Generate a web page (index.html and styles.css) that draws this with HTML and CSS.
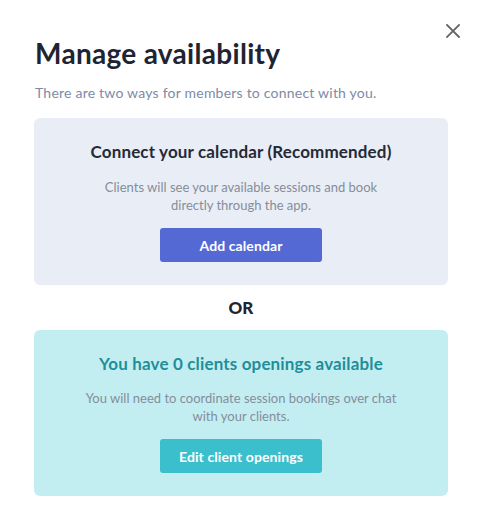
FILE: index.html
```html
<!DOCTYPE html>
<html>
  <head>
    <meta charset="utf-8">
    <title>Manage availability</title>
    <link rel="stylesheet" href="styles.css">
  </head>
<body>
  <div class="modal">
    <button class="close" title="Close">
      <svg width="14" height="14" viewBox="0 0 14 14"><path d="M1 1 L13 13 M13 1 L1 13" stroke="#666" stroke-width="1.8" stroke-linecap="square" fill="none"/></svg>
    </button>

    <h1 class="title">Manage availability</h1>
    <p class="subtitle">There are two ways for members to connect with you.</p>

    <div class="option option-calendar">
      <h2 class="option-title">Connect your calendar (Recommended)</h2>
      <p class="option-text">Clients will see your available sessions and book directly through the app.</p>
      <button class="btn btn-blue">Add calendar</button>
    </div>

    <div class="or">OR</div>

    <div class="option option-openings">
      <h2 class="option-title">You have 0 clients openings available</h2>
      <p class="option-text">You will need to coordinate session bookings over chat with your clients.</p>
      <button class="btn btn-teal">Edit client openings</button>
    </div>
  </div>
</body>
</html>
```

FILE: styles.css
```css
body { margin: 0; background: #fff; font-family: "Lato", "Noto Sans", sans-serif; color: #1f2533; }

.modal { position: relative; padding: 34px 33px 30px 34px; }

.close { position: absolute; top: 24px; right: 21px; width: 14px; height: 14px; padding: 0; border: 0; background: none; cursor: pointer; display: flex; }

.title { margin: 0 0 0 1px; font-size: 28px; line-height: 38px; font-weight: 700; letter-spacing: 0.3px; color: #1e2432; }
.subtitle { margin: 11px 0 15px 1px; font-size: 14px; line-height: 20px; letter-spacing: 0.22px; color: #7d8ba6; }

.option { border-radius: 6px; padding: 24px 0 23px; display: flex; flex-direction: column; align-items: center; text-align: center; }
.option-calendar { background: #e9edf5; }
.option-openings { background: #c3eef1; }

.option-title { margin: 0; font-size: 17px; line-height: 20px; font-weight: 700; letter-spacing: 0.15px; color: #242a37; }
.option-openings .option-title { color: #1f8e9a; }

.option-text { margin: 16px 0 14px; max-width: 312px; font-size: 13px; line-height: 18px; color: #858d9b; }
.option-openings .option-text { margin-top: 15px; }

.btn { width: 162px; height: 34px; border: 0; border-radius: 3px; font-family: inherit; font-size: 14px; font-weight: 700; letter-spacing: 0.1px; color: #fff; cursor: pointer; }
.btn-blue { background: #5469d4; }
.btn-teal { background: #3bbfcd; }

.or { text-align: center; font-size: 17px; line-height: 45px; font-weight: 900; color: #1e2432; }
```
